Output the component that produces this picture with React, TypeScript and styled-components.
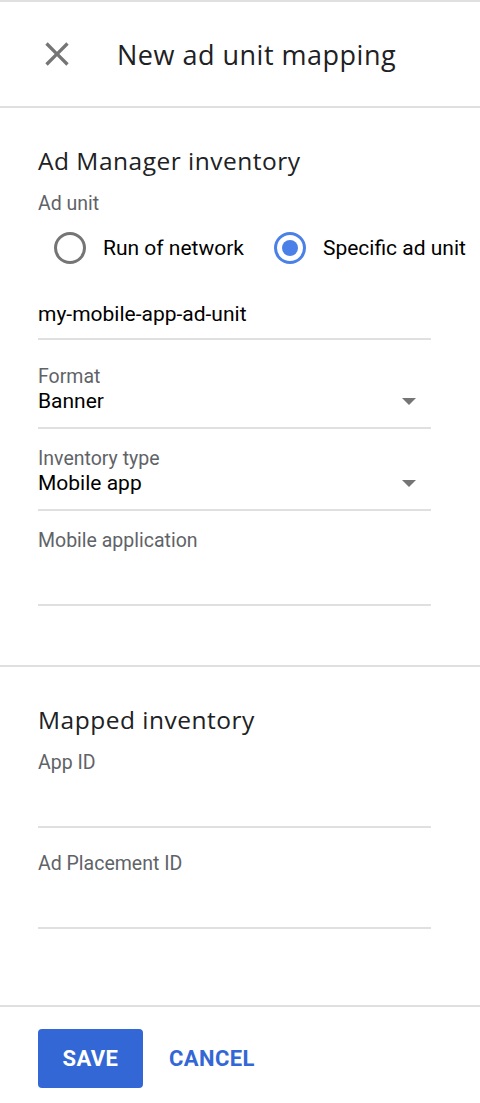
import React from 'react'
import styled, { createGlobalStyle } from 'styled-components'

const GlobalStyle = createGlobalStyle`
  body {
    margin: 0;
    background: #ffffff;
    font-family: Roboto, "Liberation Sans", Arial, sans-serif;
    color: #202124;
  }
`

type FieldProps = {
  label: string
  value?: string
  select?: boolean
  top: number
}

const Field = (props: FieldProps) => {
  return (
    <Div_Field $top={props.top} $empty={!props.value}>
      <Label>{props.label}</Label>
      {props.value && (
        <ValueRow>
          <Value>{props.value}</Value>
          {props.select && <Caret />}
        </ValueRow>
      )}
    </Div_Field>
  )
}

const Radio = (props: { label: string; checked?: boolean }) => {
  return (
    <RadioItem>
      <RadioCircle $checked={props.checked} />
      <RadioLabel>{props.label}</RadioLabel>
    </RadioItem>
  )
}

export default function App() {
  return (
    <Page>
      <GlobalStyle />
      <Header>
        <CloseButton aria-label="Close">
          <svg width="40" height="40" viewBox="0 0 24 24">
            <path
              fill="#757575"
              d="M19 6.41L17.59 5 12 10.59 6.41 5 5 6.41 10.59 12 5 17.59 6.41 19 12 13.41 17.59 19 19 17.59 13.41 12z"
            />
          </svg>
        </CloseButton>
        <Title>New ad unit mapping</Title>
      </Header>

      <Section $bottom={59}>
        <Heading>Ad Manager inventory</Heading>
        <SmallLabel>Ad unit</SmallLabel>
        <RadioRow>
          <Radio label="Run of network" />
          <Radio label="Specific ad unit" checked />
        </RadioRow>
        <TextInput>my-mobile-app-ad-unit</TextInput>
        <Field label="Format" value="Banner" select top={25} />
        <Field label="Inventory type" value="Mobile app" select top={18} />
        <Field label="Mobile application" top={18} />
      </Section>

      <Section $bottom={76}>
        <Heading>Mapped inventory</Heading>
        <Field label="App ID" top={15} />
        <Field label="Ad Placement ID" top={24} />
      </Section>

      <Footer>
        <SaveButton>SAVE</SaveButton>
        <CancelButton>CANCEL</CancelButton>
      </Footer>
    </Page>
  )
}

const Page = styled.div`
  border-top: 2px solid #e0e0e0;
  min-height: 1101px;
  background: #ffffff;
`

const Header = styled.header`
  display: flex;
  align-items: center;
  height: 104px;
  border-bottom: 2px solid #e0e0e0;
  padding-left: 37px;
`

const CloseButton = styled.div`
  display: flex;
  width: 40px;
  height: 40px;
  margin-right: 40px;
`

const Title = styled.h1`
  margin: 0;
  font-family: "Open Sans", Roboto, sans-serif;
  font-size: 27px;
  font-weight: 400;
  letter-spacing: 0.5px;
  color: #202124;
`

const Section = styled.section<{ $bottom: number }>`
  padding: 37px 0 ${(p) => p.$bottom}px 38px;
  border-bottom: 2px solid #e0e0e0;
`

const Heading = styled.h2`
  margin: 0;
  font-family: "Open Sans", Roboto, sans-serif;
  font-size: 24.5px;
  line-height: 32px;
  font-weight: 400;
  letter-spacing: 0.5px;
  color: #202124;
`

const SmallLabel = styled.div`
  margin-top: 15px;
  font-size: 19.5px;
  line-height: 24px;
  color: #5f6368;
`

const RadioRow = styled.div`
  display: flex;
  align-items: center;
  gap: 30px;
  height: 40px;
  margin-top: 12px;
  padding-left: 16px;
`

const RadioItem = styled.label`
  display: flex;
  align-items: center;
  gap: 17px;
`

const RadioCircle = styled.span<{ $checked?: boolean }>`
  box-sizing: border-box;
  width: 32px;
  height: 32px;
  border-radius: 50%;
  border: 3px solid ${(p) => (p.$checked ? '#4a80e8' : '#757575')};
  display: flex;
  align-items: center;
  justify-content: center;
  &::after {
    content: '';
    display: ${(p) => (p.$checked ? 'block' : 'none')};
    width: 16px;
    height: 16px;
    border-radius: 50%;
    background: #4a80e8;
  }
`

const RadioLabel = styled.span`
  font-size: 21px;
  color: #000000;
`

const TextInput = styled.div`
  width: 393px;
  margin-top: 32px;
  padding-bottom: 10px;
  border-bottom: 2px solid #e0e0e0;
  font-size: 21px;
  line-height: 28px;
  color: #000000;
`

const Div_Field = styled.div<{ $top: number; $empty: boolean }>`
  width: 393px;
  margin-top: ${(p) => p.$top}px;
  padding-bottom: ${(p) => (p.$empty ? 51 : 14)}px;
  border-bottom: 2px solid #e0e0e0;
`

const Label = styled.div`
  font-size: 19.5px;
  line-height: 24px;
  color: #5f6368;
`

const ValueRow = styled.div`
  display: flex;
  align-items: center;
  justify-content: space-between;
  padding-right: 15px;
`

const Value = styled.div`
  font-size: 21px;
  line-height: 24px;
  color: #000000;
`

const Caret = styled.span`
  width: 0;
  height: 0;
  border-left: 7px solid transparent;
  border-right: 7px solid transparent;
  border-top: 7px solid #757575;
`

const Footer = styled.footer`
  display: flex;
  align-items: center;
  gap: 26px;
  padding: 22px 0 0 38px;
`

const SaveButton = styled.button`
  width: 105px;
  height: 59px;
  border: none;
  border-radius: 4px;
  background: #3367d6;
  color: #ffffff;
  font-family: Roboto, "Liberation Sans", Arial, sans-serif;
  font-size: 22px;
  font-weight: 700;
  letter-spacing: 0.4px;
`

const CancelButton = styled.button`
  border: none;
  background: none;
  padding: 0;
  color: #3367d6;
  font-family: Roboto, "Liberation Sans", Arial, sans-serif;
  font-size: 22px;
  font-weight: 700;
  letter-spacing: 0.4px;
`
